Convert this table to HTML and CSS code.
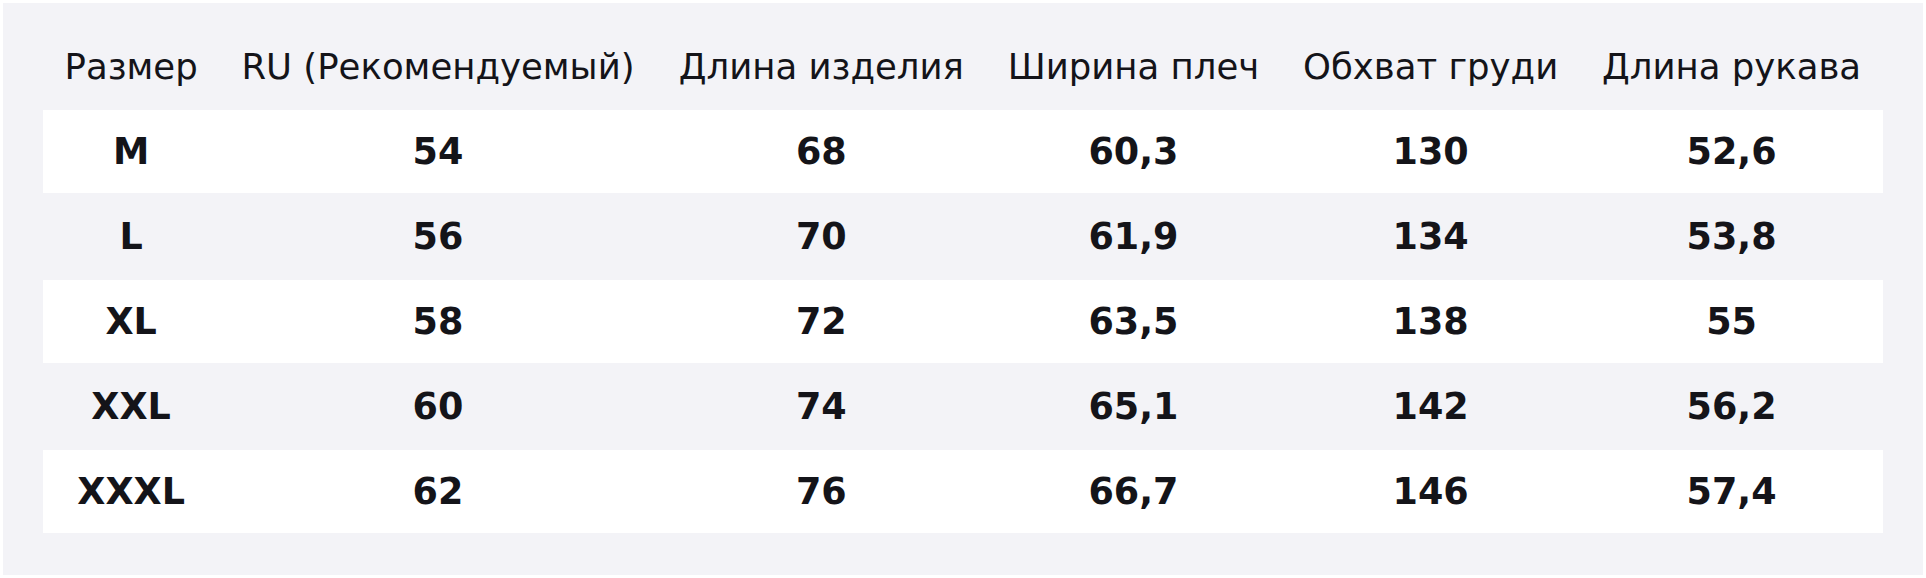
FILE: index.html
```html
<!DOCTYPE html>
<html lang="ru">
<head>
<meta charset="utf-8">
<title>Таблица размеров</title>
<link rel="stylesheet" href="styles.css">
</head>
<body>
<div class="sizes">
  <table class="size-table">
    <thead>
      <tr>
        <th>Размер</th>
        <th>RU (Рекомендуемый)</th>
        <th>Длина изделия</th>
        <th>Ширина плеч</th>
        <th>Обхват груди</th>
        <th>Длина рукава</th>
      </tr>
    </thead>
    <tbody>
      <tr><td>M</td><td>54</td><td>68</td><td>60,3</td><td>130</td><td>52,6</td></tr>
      <tr><td>L</td><td>56</td><td>70</td><td>61,9</td><td>134</td><td>53,8</td></tr>
      <tr><td>XL</td><td>58</td><td>72</td><td>63,5</td><td>138</td><td>55</td></tr>
      <tr><td>XXL</td><td>60</td><td>74</td><td>65,1</td><td>142</td><td>56,2</td></tr>
      <tr><td>XXXL</td><td>62</td><td>76</td><td>66,7</td><td>146</td><td>57,4</td></tr>
    </tbody>
  </table>
</div>
</body>
</html>
```

FILE: styles.css
```css
html, body {
  margin: 0;
  padding: 0;
  background: #ffffff;
}

body {
  padding: 3px;
  font-family: "DejaVu Sans", sans-serif;
  color: #141419;
}

.sizes {
  background: #f3f3f7;
  padding: 40px;
}

.size-table {
  width: 100%;
  border-collapse: separate;
  border-spacing: 0 2px;
}

.size-table th {
  font-size: 35.5px;
  font-weight: normal;
  padding: 1px 21px 20px;
  text-align: center;
  white-space: nowrap;
  line-height: 42px;
}

.size-table td {
  font-size: 36.5px;
  font-weight: bold;
  text-align: center;
  padding: 0 21px;
  height: 83px;
  line-height: 42px;
  vertical-align: middle;
}

.size-table tbody tr:nth-child(odd) td {
  background: #ffffff;
}
```
